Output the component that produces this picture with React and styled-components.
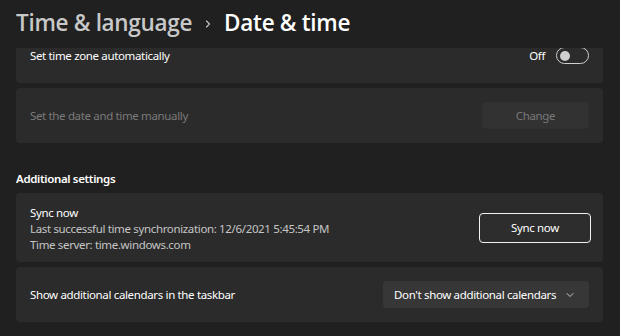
import React from 'react'
import styled, { createGlobalStyle } from 'styled-components'

const GlobalStyle = createGlobalStyle`
  html, body {
    margin: 0;
    padding: 0;
    background: #202020;
  }
  body {
    font-family: 'Noto Sans', 'Open Sans', sans-serif;
    font-size: 11.5px;
    letter-spacing: -0.35px;
    color: #ffffff;
    -webkit-font-smoothing: antialiased;
  }
`

export default function App() {
  return (
    <>
      <GlobalStyle />
      <Page>
        <Header>
          <Crumb>Time &amp; language</Crumb>
          <Chevron>
            <svg width="8" height="10" viewBox="0 0 8 10">
              <path d="M2.5 2 L5.5 5 L2.5 8" fill="none" stroke="#c8c8c8" strokeWidth="1.1" strokeLinecap="round" strokeLinejoin="round" />
            </svg>
          </Chevron>
          <Current>Date &amp; time</Current>
        </Header>
        <Scroller>
          <List>
            <Card>
              <Label>Set time zone automatically</Label>
              <Controls>
                <StateText>Off</StateText>
                <Toggle>
                  <Knob />
                </Toggle>
              </Controls>
            </Card>
            <Card>
              <Label disabled>Set the date and time manually</Label>
              <Button disabled>Change</Button>
            </Card>

            <SectionTitle>Additional settings</SectionTitle>

            <Card tall>
              <TextStack>
                <Label>Sync now</Label>
                <SubLabel>Last successful time synchronization: 12/6/2021 5:45:54 PM</SubLabel>
                <SubLabel>Time server: time.windows.com</SubLabel>
              </TextStack>
              <Button focused>Sync now</Button>
            </Card>
            <Card>
              <Label>Show additional calendars in the taskbar</Label>
              <Select>
                <span>Don't show additional calendars</span>
                <svg width="10" height="10" viewBox="0 0 10 10">
                  <path d="M2 3.5 L5 6.5 L8 3.5" fill="none" stroke="#c8c8c8" strokeWidth="1" strokeLinecap="round" strokeLinejoin="round" />
                </svg>
              </Select>
            </Card>
          </List>
        </Scroller>
      </Page>
    </>
  )
}

const Page = styled.div`
  height: 336px;
  display: flex;
  flex-direction: column;
  padding: 0 17px 0 16px;
  overflow: hidden;
`

const Header = styled.div`
  height: 48px;
  flex: none;
  display: flex;
  align-items: center;
  gap: 12px;
  padding-bottom: 4px;
  box-sizing: border-box;
  font-family: 'Open Sans', 'Noto Sans', sans-serif;
  font-size: 22.5px;
  font-weight: 600;
  letter-spacing: -0.3px;
`

const Crumb = styled.span`
  color: #c8c8c8;
`

const Chevron = styled.span`
  display: flex;
  align-items: center;
  padding-top: 3px;
`

const Current = styled.span`
  color: #ffffff;
`

const Scroller = styled.div`
  flex: 1;
  overflow: hidden;
`

const List = styled.div`
  margin-top: -20px;
  display: flex;
  flex-direction: column;
  gap: 5px;
`

const Card = styled.div`
  height: ${p => (p.tall ? '69px' : '55px')};
  box-sizing: border-box;
  background: #2b2b2b;
  border-radius: 4px;
  padding: 0 14px;
  display: flex;
  align-items: center;
  justify-content: space-between;
`

const Label = styled.div`
  color: ${p => (p.disabled ? '#7a7a7a' : '#ffffff')};
`

const SubLabel = styled.div`
  color: #c5c5c5;
`

const TextStack = styled.div`
  display: flex;
  flex-direction: column;
  line-height: 16px;
  padding-top: 2px;
`

const Controls = styled.div`
  display: flex;
  align-items: center;
  gap: 11px;
`

const StateText = styled.span`
  color: #ffffff;
`

const Toggle = styled.div`
  width: 33px;
  height: 17px;
  box-sizing: border-box;
  border: 1px solid #cfcfcf;
  border-radius: 9px;
  display: flex;
  align-items: center;
  padding-left: 3px;
`

const Knob = styled.div`
  width: 10px;
  height: 10px;
  border-radius: 50%;
  background: #d0d0d0;
`

const Button = styled.div`
  box-sizing: border-box;
  height: ${p => (p.focused ? '30px' : '27px')};
  width: ${p => (p.focused ? '112px' : '107px')};
  margin-right: ${p => (p.focused ? '-2px' : '0')};
  border-radius: 4px;
  display: flex;
  align-items: center;
  justify-content: center;
  background: ${p => (p.disabled ? '#323232' : '#2d2d2d')};
  color: ${p => (p.disabled ? '#787878' : '#ffffff')};
  border: ${p => (p.focused ? '1.5px solid #f2f2f2' : '1px solid #303030')};
`

const SectionTitle = styled.div`
  font-weight: 600;
  padding: 23px 0 7px 0;
  line-height: 15px;
  margin-bottom: -5px;
`

const Select = styled.div`
  box-sizing: border-box;
  width: 206px;
  height: 27px;
  background: #373737;
  border-radius: 4px;
  display: flex;
  align-items: center;
  justify-content: space-between;
  padding: 0 14px 0 11px;
  white-space: nowrap;
  color: #ffffff;
`
